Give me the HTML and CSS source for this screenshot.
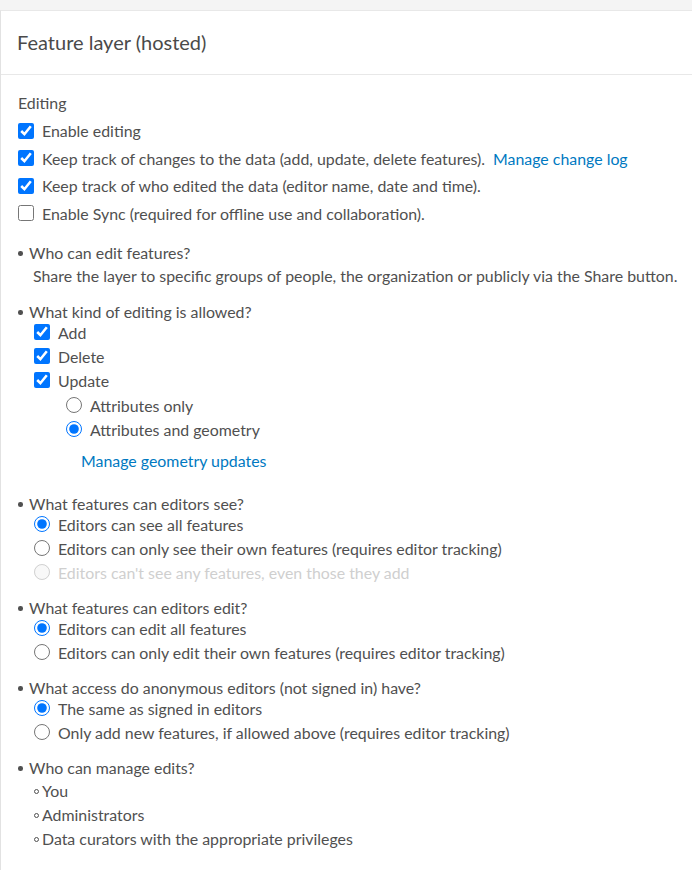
FILE: index.html
```html
<!DOCTYPE html>
<html lang="en">
<head>
<meta charset="utf-8">
<title>Feature layer (hosted)</title>
<link rel="stylesheet" href="styles.css">
</head>
<body>
<div class="page">
  <section class="card">
    <header class="card-head">Feature layer (hosted)</header>
    <div class="card-body">
      <div class="section-title">Editing</div>
      <label class="check-row"><input type="checkbox" checked><span>Enable editing</span></label>
      <label class="check-row"><input type="checkbox" checked><span>Keep track of changes to the data (add, update, delete features).</span><a class="link inline-link" href="#">Manage change log</a></label>
      <label class="check-row"><input type="checkbox" checked><span>Keep track of who edited the data (editor name, date and time).</span></label>
      <label class="check-row"><input type="checkbox"><span>Enable Sync (required for offline use and collaboration).</span></label>

      <ul class="questions">
        <li class="question">
          <div class="q-title">Who can edit features?</div>
          <p class="q-note">Share the layer to specific groups of people, the organization or publicly via the Share button.</p>
        </li>
        <li class="question">
          <div class="q-title">What kind of editing is allowed?</div>
          <div class="options">
            <label class="opt"><input type="checkbox" checked><span>Add</span></label>
            <label class="opt"><input type="checkbox" checked><span>Delete</span></label>
            <label class="opt"><input type="checkbox" checked><span>Update</span></label>
            <div class="sub-options">
              <label class="opt"><input type="radio" name="upd"><span>Attributes only</span></label>
              <label class="opt"><input type="radio" name="upd" checked><span>Attributes and geometry</span></label>
            </div>
            <a class="link geom-link" href="#">Manage geometry updates</a>
          </div>
        </li>
        <li class="question">
          <div class="q-title">What features can editors see?</div>
          <div class="options">
            <label class="opt"><input type="radio" name="see" checked><span>Editors can see all features</span></label>
            <label class="opt"><input type="radio" name="see"><span>Editors can only see their own features (requires editor tracking)</span></label>
            <label class="opt disabled"><input type="radio" name="see" disabled><span>Editors can't see any features, even those they add</span></label>
          </div>
        </li>
        <li class="question">
          <div class="q-title">What features can editors edit?</div>
          <div class="options">
            <label class="opt"><input type="radio" name="edit" checked><span>Editors can edit all features</span></label>
            <label class="opt"><input type="radio" name="edit"><span>Editors can only edit their own features (requires editor tracking)</span></label>
          </div>
        </li>
        <li class="question">
          <div class="q-title">What access do anonymous editors (not signed in) have?</div>
          <div class="options">
            <label class="opt"><input type="radio" name="anon" checked><span>The same as signed in editors</span></label>
            <label class="opt"><input type="radio" name="anon"><span>Only add new features, if allowed above (requires editor tracking)</span></label>
          </div>
        </li>
        <li class="question">
          <div class="q-title">Who can manage edits?</div>
          <ul class="subs">
            <li>You</li>
            <li>Administrators</li>
            <li>Data curators with the appropriate privileges</li>
          </ul>
        </li>
      </ul>
    </div>
  </section>
</div>
</body>
</html>
```
FILE: styles.css
```css
html, body {
  margin: 0;
  padding: 0;
}
body {
  background: #f4f4f4;
  font-family: "Lato", "Open Sans", sans-serif;
  color: #505050;
  font-size: 15.9px;
  width: 692px;
  height: 870px;
  overflow: hidden;
}
.page {
  padding-top: 10px;
}
.card {
  background: #fff;
  border-top: 1px solid #e8e8e8;
  border-left: 1px solid #e2e2e2;
  width: 760px;
  min-height: 870px;
}
.card-head {
  font-size: 20px;
  line-height: 24px;
  padding: 19px 16px 20px;
  color: #4a4a4a;
  border-bottom: 1px solid #e8e8e8;
}
.card-body {
  padding: 18px 0 0 17px;
}
.section-title {
  line-height: 20px;
}
.check-row {
  display: flex;
  align-items: center;
  height: 20px;
  margin-top: 7.5px;
  white-space: nowrap;
}
input[type="checkbox"],
input[type="radio"] {
  width: 16px;
  height: 16px;
  margin: 0 8px 0 0;
  flex: none;
}
.link {
  color: #0079c1;
  text-decoration: none;
}
.inline-link {
  margin-left: 8px;
}
.questions {
  list-style: none;
  margin: 21px 0 0;
  padding: 0;
}
.question {
  margin-top: 14px;
}
.question:first-child {
  margin-top: 0;
}
.q-title {
  position: relative;
  line-height: 18px;
  padding-left: 11px;
  white-space: nowrap;
}
.q-title::before {
  content: "";
  position: absolute;
  left: 0;
  top: 7px;
  width: 4.5px;
  height: 4.5px;
  border-radius: 50%;
  background: #505050;
}
.q-note {
  margin: 2px 0 0 15px;
  line-height: 24px;
  padding-bottom: 1px;
  white-space: nowrap;
}
.options {
  padding-left: 16px;
}
.opt {
  display: flex;
  align-items: center;
  box-sizing: border-box;
  height: 24px;
  padding-bottom: 2px;
  white-space: nowrap;
}
.opt.disabled {
  color: #cfcfcf;
}
.sub-options {
  margin-top: 1px;
  padding-left: 32px;
}
.geom-link {
  display: block;
  margin: 7px 0 0 47px;
  line-height: 24px;
  padding-bottom: 8px;
}
.subs {
  list-style: none;
  margin: 2px 0 0;
  padding: 0 0 0 16px;
}
.subs li {
  position: relative;
  line-height: 24px;
  padding-left: 8px;
}
.subs li::before {
  content: "";
  position: absolute;
  left: 0;
  top: 10px;
  width: 3px;
  height: 3px;
  border: 1px solid #505050;
  border-radius: 50%;
}
```
